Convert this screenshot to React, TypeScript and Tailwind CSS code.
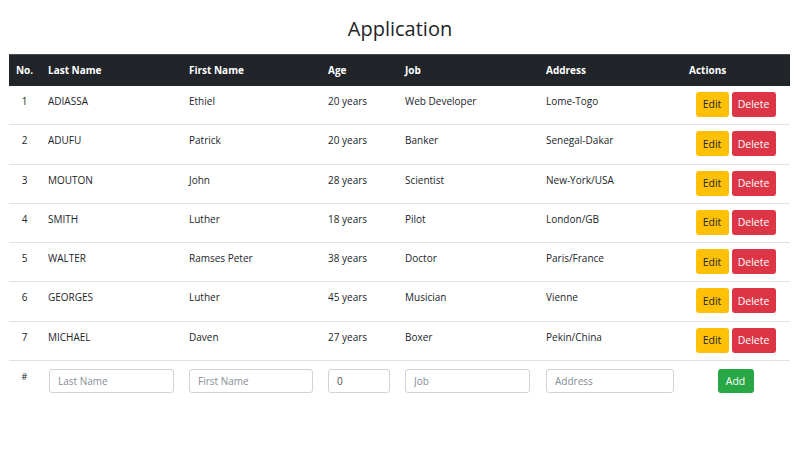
import { useState } from 'react';

interface Person {
  lastName: string;
  firstName: string;
  age: number;
  job: string;
  address: string;
}

const initial: Person[] = [
  { lastName: 'ADIASSA', firstName: 'Ethiel', age: 20, job: 'Web Developer', address: 'Lome-Togo' },
  { lastName: 'ADUFU', firstName: 'Patrick', age: 20, job: 'Banker', address: 'Senegal-Dakar' },
  { lastName: 'MOUTON', firstName: 'John', age: 28, job: 'Scientist', address: 'New-York/USA' },
  { lastName: 'SMITH', firstName: 'Luther', age: 18, job: 'Pilot', address: 'London/GB' },
  { lastName: 'WALTER', firstName: 'Ramses Peter', age: 38, job: 'Doctor', address: 'Paris/France' },
  { lastName: 'GEORGES', firstName: 'Luther', age: 45, job: 'Musician', address: 'Vienne' },
  { lastName: 'MICHAEL', firstName: 'Daven', age: 27, job: 'Boxer', address: 'Pekin/China' },
];

const input =
  'h-[24px] rounded-[3px] border border-[#ced4da] bg-white px-[8px] text-[10px] text-[#495057] placeholder:text-[#868e96] outline-none';

export default function App() {
  const [people] = useState(initial);

  return (
    <div className="w-[800px] h-[450px] bg-white text-[#212529] font-['Open_Sans',sans-serif]">
      <h1 className="pt-[16px] pb-[12px] text-center text-[20px] leading-[26px] font-normal">Application</h1>

      <table className="ml-[9px] w-[781px] border-collapse table-fixed text-[10px] leading-[18px]">
        <colgroup>
          <col className="w-[31px]" />
          <col className="w-[141px]" />
          <col className="w-[139px]" />
          <col className="w-[77px]" />
          <col className="w-[141px]" />
          <col className="w-[143px]" />
          <col className="w-[109px]" />
        </colgroup>
        <thead>
          <tr className="bg-[#212529] text-white border-t border-[#454d55] h-[31px]">
            <th className="text-center font-bold">No.</th>
            <th className="px-[8px] text-left font-bold">Last Name</th>
            <th className="px-[8px] text-left font-bold">First Name</th>
            <th className="px-[8px] text-left font-bold">Age</th>
            <th className="px-[8px] text-left font-bold">Job</th>
            <th className="px-[8px] text-left font-bold">Address</th>
            <th className="px-[8px] text-left font-bold">Actions</th>
          </tr>
        </thead>
        <tbody>
          {people.map((p, i) => (
            <tr key={i} className="border-b border-[#dee2e6] align-top h-[39.3px]">
              <td className="pt-[6px] text-center">{i + 1}</td>
              <td className="px-[8px] pt-[6px]">{p.lastName}</td>
              <td className="px-[8px] pt-[6px]">{p.firstName}</td>
              <td className="px-[8px] pt-[6px]">{p.age} years</td>
              <td className="px-[8px] pt-[6px]">{p.job}</td>
              <td className="px-[8px] pt-[6px]">{p.address}</td>
              <td className="pt-[6px]">
                <div className="flex justify-center gap-[3px]">
                  <button className="h-[25px] w-[33px] rounded-[3px] bg-[#ffc107] text-[10.5px] text-[#212529]">Edit</button>
                  <button className="h-[25px] w-[44px] rounded-[3px] bg-[#dc3545] text-[10.5px] text-white">Delete</button>
                </div>
              </td>
            </tr>
          ))}
          <tr className="align-top">
            <td className="pt-[7px] text-center text-[9px]">#</td>
            <td className="pl-[9px] pt-[8px]">
              <input className={`${input} w-[125px]`} placeholder="Last Name" />
            </td>
            <td className="pl-[8px] pt-[8px]">
              <input className={`${input} w-[124px]`} placeholder="First Name" />
            </td>
            <td className="pl-[8px] pt-[8px]">
              <input className={`${input} w-[62px]`} defaultValue="0" />
            </td>
            <td className="pl-[8px] pt-[8px]">
              <input className={`${input} w-[125px]`} placeholder="Job" />
            </td>
            <td className="pl-[8px] pt-[8px]">
              <input className={`${input} w-[128px]`} placeholder="Address" />
            </td>
            <td className="pt-[8px]">
              <div className="flex justify-center">
                <button className="h-[24px] w-[36px] rounded-[3px] bg-[#28a745] text-[10.5px] text-white">Add</button>
              </div>
            </td>
          </tr>
        </tbody>
      </table>
    </div>
  );
}
